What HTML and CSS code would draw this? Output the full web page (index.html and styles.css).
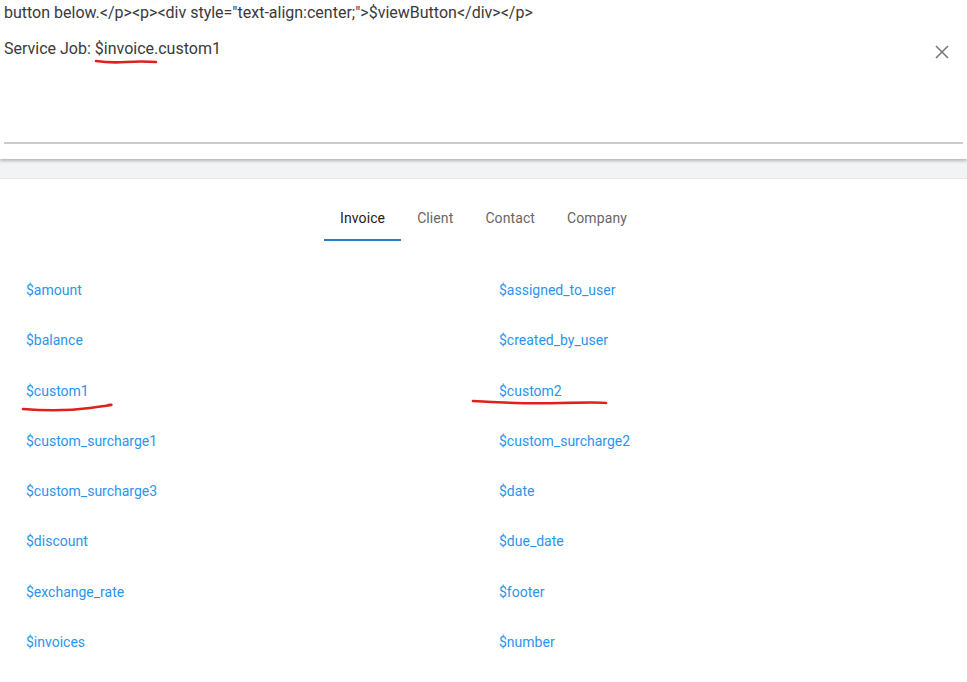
FILE: index.html
```html
<!DOCTYPE html>
<html>
<head>
<meta charset="utf-8">
<link rel="stylesheet" href="styles.css">
</head>
<body>
<div class="page">
  <div class="editor">
    <div class="editor-row">
      <div class="editor-text">
        <div class="line">button below.&lt;/p&gt;&lt;p&gt;&lt;div style="text-align:center;"&gt;$viewButton&lt;/div&gt;&lt;/p&gt;</div>
        <div class="line">&nbsp;</div>
        <div class="line">Service Job: $invoice.custom1</div>
      </div>
      <button class="close" aria-label="close">
        <svg width="16" height="16" viewBox="0 0 16 16"><path d="M2 2L14 14M14 2L2 14" stroke="#777" stroke-width="1.6" fill="none"/></svg>
      </button>
    </div>
    <div class="underline"></div>
  </div>
  <div class="band"></div>
  <div class="tabs">
    <div class="tab active">Invoice</div>
    <div class="tab">Client</div>
    <div class="tab">Contact</div>
    <div class="tab">Company</div>
  </div>
  <div class="vars">
    <div class="var">$amount</div><div class="var">$assigned_to_user</div>
    <div class="var">$balance</div><div class="var">$created_by_user</div>
    <div class="var">$custom1</div><div class="var">$custom2</div>
    <div class="var">$custom_surcharge1</div><div class="var">$custom_surcharge2</div>
    <div class="var">$custom_surcharge3</div><div class="var">$date</div>
    <div class="var">$discount</div><div class="var">$due_date</div>
    <div class="var">$exchange_rate</div><div class="var">$footer</div>
    <div class="var">$invoices</div><div class="var">$number</div>
  </div>
  <svg class="marks" width="967" height="682" viewBox="0 0 967 682">
    <path d="M96 61 Q110 63 126 62 T156 62" stroke="#e0201c" stroke-width="2.6" fill="none" stroke-linecap="round"/>
    <path d="M23 409 Q60 412 90 408 T108 405" stroke="#e0201c" stroke-width="2.6" fill="none" stroke-linecap="round"/>
    <path d="M473 401 Q520 404 560 403 T606 403" stroke="#e0201c" stroke-width="2.6" fill="none" stroke-linecap="round"/>
  </svg>
</div>
</body>
</html>
```
FILE: styles.css
```css
* { box-sizing: border-box; }
html, body { margin: 0; padding: 0; background: #fff; }
body { font-family: Roboto, "Noto Sans", Arial, sans-serif; overflow: hidden; }
.page { position: relative; width: 967px; height: 682px; overflow: hidden; }
.editor { padding: 4px 4px 0 4px; height: 159px; box-shadow: 0 2px 3px rgba(0,0,0,0.25); position: relative; z-index: 1; background: #fff; }
.editor-row { display: flex; justify-content: space-between; height: 138px; }
.editor-text { font-size: 16px; line-height: 18px; color: #3a3a3a; }
.line { white-space: nowrap; }
.close { border: 0; background: none; padding: 0; margin: 40px 13px 0 0; width: 16px; height: 16px; display: flex; cursor: pointer; }
.underline { height: 2px; background: #cbcbcb; }
.band { height: 20px; background: #f2f3f5; border-bottom: 1px solid #e6e6e8; }
.tabs { display: flex; justify-content: center; padding-top: 22px; }
.tab { font-size: 14px; color: #666; padding: 9px 16px 13px; border-bottom: 2px solid transparent; letter-spacing: 0.1px; }
.tab.active { color: #222; border-bottom-color: #2e7ac4; }
.vars { display: grid; grid-template-columns: 473px 1fr; padding: 40px 0 0 26px; grid-auto-rows: 50.3px; }
.var { font-size: 14px; color: #2b95ee; line-height: 18px; }
.marks { position: absolute; left: 0; top: 0; pointer-events: none; z-index: 2; }
```
